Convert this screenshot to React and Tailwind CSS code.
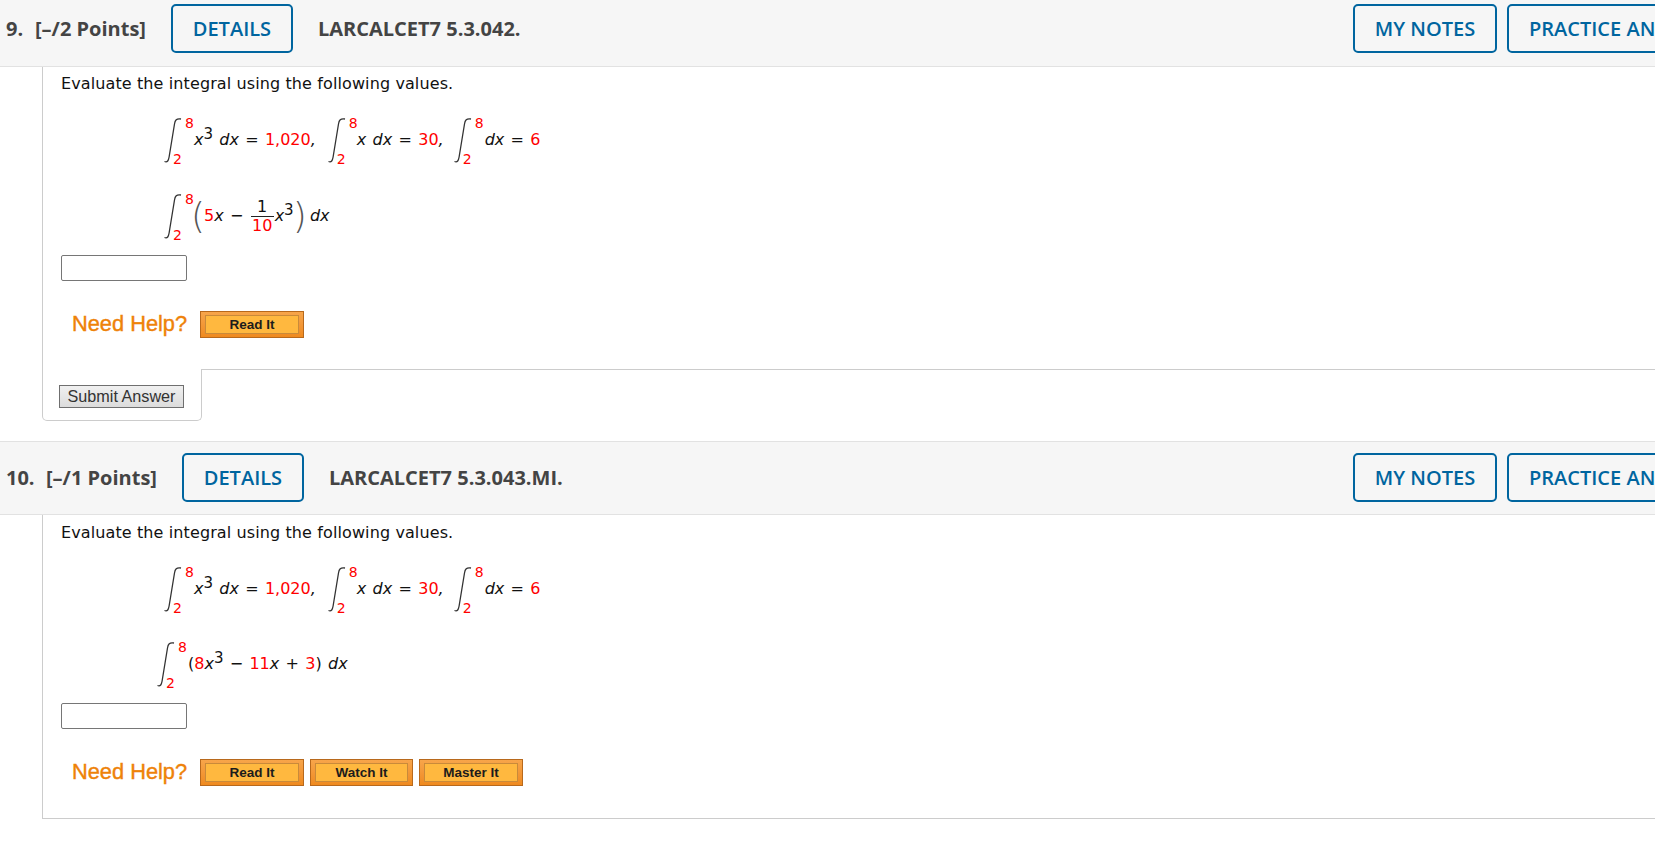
import React from "react";

const sans = "font-['Open_Sans',sans-serif]";
const math = "font-['DejaVu_Sans',sans-serif]";
const R = ({ children }) => <span className="text-[#ff0000]">{children}</span>;
const V = ({ children }) => <i>{children}</i>;
const Cube = () => <sup className="relative top-[-6px] align-baseline text-[15px] leading-none">3</sup>;

function Integral({ className = "" }) {
  return (
    <span className={`relative inline-block h-[46px] w-[28px] shrink-0 ${className}`}>
      <svg className="absolute left-0 top-0" width="20" height="46" viewBox="0 0 20 46" fill="none">
        <path d="M0.5 44.5c3 1.2 4-1 4.6-4.5L10.5 7c.5-3.5 2-6 6.5-5" stroke="#333" strokeWidth="1.3" />
      </svg>
      <span className="absolute left-[21px] top-[-2px] text-[14px] leading-[16px] text-[#ff0000]">8</span>
      <span className="absolute left-[9px] top-[34px] text-[14px] leading-[16px] text-[#ff0000]">2</span>
    </span>
  );
}

const HeadBtn = ({ children, className = "" }) => (
  <button className={`h-[49px] shrink-0 whitespace-nowrap rounded-[5px] border-2 border-[#00659f] text-[20px] font-semibold text-[#00659f] ${className}`}>
    {children}
  </button>
);

function Header({ num, points, title, cut, numW }) {
  return (
    <div className={`flex items-start border-b border-[#e2e2e2] bg-[#f6f6f6] ${cut ? "h-[67px] pt-[4px]" : "mt-[20px] h-[74px] border-t pt-[11px]"} ${sans}`}>
      <div className="flex h-[49px] w-[1353px] shrink-0 items-center text-[20px] font-bold text-[#444]">
        <span className={`ml-[6px] ${numW}`}>{num}</span>
        <span className="whitespace-nowrap">{points}</span>
        <HeadBtn className="ml-[25px] w-[122px]">DETAILS</HeadBtn>
        <span className="ml-[25px] whitespace-nowrap">{title}</span>
      </div>
      <HeadBtn className="w-[144px]">MY NOTES</HeadBtn>
      <HeadBtn className="ml-[10px] px-[20px]">PRACTICE ANOTHER</HeadBtn>
    </div>
  );
}

function HelpBtn({ children, w }) {
  return (
    <button className={`h-[27px] ${w} border border-[#b8691c] bg-gradient-to-b from-[#f7a54a] to-[#ef8a1e] px-[4px] py-[3px]`}>
      <span className="flex h-full items-center justify-center border border-[#c98a3a] bg-[#ffb83f] pt-[1px] font-['Liberation_Sans',sans-serif] text-[13.5px] font-bold text-[#1c1c1c]">
        {children}
      </span>
    </button>
  );
}

function Givens() {
  return (
    <div className="ml-[103px] mt-[24px] flex h-[46px] items-center whitespace-pre text-[16px] [word-spacing:1.2px]">
      <Integral />
      <span className="ml-[2px]"><V>x</V><Cube /> <V>dx</V> = <R>1,020</R><i>,</i></span>
      <Integral className="ml-[12px]" />
      <span className="ml-[1px]"><V>x</V> <V>dx</V> = <R>30</R><i>,</i></span>
      <Integral className="ml-[10px]" />
      <span className="ml-[3px]"><V>dx</V> = <R>6</R></span>
    </div>
  );
}

function Help({ children }) {
  return (
    <div className="ml-[11px] mt-[30px] flex h-[27px] items-center">
      <span className="w-[128px] font-['Liberation_Sans',sans-serif] text-[21.8px] text-[#ee8209] [-webkit-text-stroke:0.4px_#ee8209]">Need Help?</span>
      {children}
    </div>
  );
}

const Answer = ({ className }) => <input className={`block h-[26px] w-[126px] rounded-[2px] border border-[#767676] bg-white ${className}`} aria-label="answer" />;
const Lead = ({ className = "" }) => <p className={`text-[16px] leading-[18px] tracking-[0.11px] ${className}`}>Evaluate the integral using the following values.</p>;
const Paren = ({ children }) => <span className="flex w-[12px] justify-center text-[36px] font-extralight leading-none text-[#555]">{children}</span>;

export default function App() {
  return (
    <div className={`h-[853px] w-[1655px] overflow-hidden bg-white text-[#111] ${math}`}>
      <Header cut num="9." numW="w-[29px]" points="[–/2 Points]" title="LARCALCET7 5.3.042." />
      <div className="ml-[42px]">
        <div className="h-[302px] border-l border-[#ccc] pl-[18px] pt-[8px]">
          <Lead />
          <Givens />
          <div className="ml-[103px] mt-[30px] flex h-[46px] items-center whitespace-pre text-[16px] [word-spacing:1.2px]">
            <Integral />
            <Paren>(</Paren>
            <span><R>5</R><V>x</V> − </span>
            <span className="mx-[1px] inline-flex flex-col items-center leading-[18px]">
              <span className="w-[23px] border-b border-[#222] text-center">1</span>
              <R>10</R>
            </span>
            <span><V>x</V><Cube /></span>
            <Paren>)</Paren>
            <span className="ml-[-2px]"> <V>dx</V></span>
          </div>
          <Answer className="mt-[16px]" />
          <Help><HelpBtn w="w-[104px]">Read It</HelpBtn></Help>
        </div>
        <div className="flex h-[52px]">
          <div className="w-[160px] rounded-b-[5px] border-b border-l border-r border-[#ccc] pl-[16px] pt-[16px]">
            <button className="block h-[23px] w-[125px] border border-[#6f6f6f] bg-gradient-to-b from-[#f0f0f0] to-[#dcdcdc] font-['Liberation_Sans',sans-serif] text-[16.2px] leading-none text-[#333]">Submit Answer</button>
          </div>
          <div className="flex-1 border-t border-[#ccc]" />
        </div>
      </div>
      <Header num="10." numW="w-[40px]" points="[–/1 Points]" title="LARCALCET7 5.3.043.MI." />
      <div className="ml-[42px] h-[304px] border-b border-l border-[#ccc] pl-[18px] pt-[9px]">
        <Lead />
        <Givens />
        <div className="ml-[96px] mt-[29px] flex h-[46px] items-center whitespace-pre text-[16px] [word-spacing:1.2px]">
          <Integral />
          <span className="ml-[3px]">(<R>8</R><V>x</V><Cube /> − <R>11</R><V>x</V> + <R>3</R>) <V>dx</V></span>
        </div>
        <Answer className="mt-[16px]" />
        <Help>
          <HelpBtn w="w-[104px]">Read It</HelpBtn>
          <HelpBtn w="w-[103px] ml-[6px]">Watch It</HelpBtn>
          <HelpBtn w="w-[104px] ml-[6px]">Master It</HelpBtn>
        </Help>
      </div>
    </div>
  );
}
